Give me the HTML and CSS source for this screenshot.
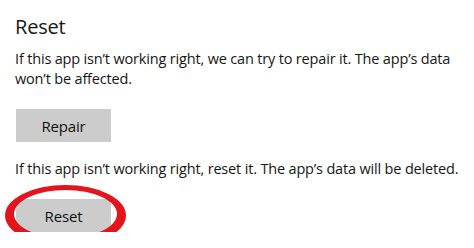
FILE: index.html
```html
<!DOCTYPE html>
<html>
<head>
<meta charset="utf-8">
<link rel="stylesheet" href="styles.css">
</head>
<body>
<section class="panel">
  <h2 class="title">Reset</h2>
  <p class="desc">If this app isn’t working right, we can try to repair it. The app’s data<br>won’t be affected.</p>
  <button class="btn btn-repair">Repair</button>
  <p class="desc desc-reset">If this app isn’t working right, reset it. The app’s data will be deleted.</p>
  <div class="btn-wrap">
    <button class="btn">Reset</button>
    <svg class="circle" width="135" height="70" viewBox="0 0 135 70" aria-hidden="true">
      <path fill="#e3141c" fill-rule="evenodd" d="M5 35.5a60.5 30.5 0 1 0 121 0a60.5 30.5 0 1 0 -121 0Z M14 34a51.5 24 0 1 0 103 0a51.5 24 0 1 0 -103 0Z"/>
    </svg>
  </div>
</section>
</body>
</html>
```
FILE: styles.css
```css
html, body {
  margin: 0;
  padding: 0;
  background: #ffffff;
}
body {
  font-family: "Open Sans", "Noto Sans", sans-serif;
  color: #161616;
}
.panel {
  padding: 13px 0 0 15px;
  display: flex;
  flex-direction: column;
  align-items: flex-start;
}
.title {
  margin: 0;
  font-size: 20px;
  font-weight: 400;
  line-height: 28px;
  letter-spacing: -0.2px;
}
.desc {
  margin: 8px 0 0 0;
  font-size: 14.5px;
  line-height: 20px;
  letter-spacing: -0.17px;
  white-space: nowrap;
}
.btn {
  margin: 0;
  padding: 0;
  border: none;
  width: 95px;
  height: 33px;
  background: #cccccc;
  color: #111111;
  font-family: inherit;
  font-size: 15px;
  letter-spacing: -0.15px;
}
.btn-repair {
  margin-top: 20px;
  margin-left: 1px;
}
.desc-reset {
  margin-top: 17px;
}
.btn-wrap {
  position: relative;
  margin-top: 20px;
  margin-left: 1px;
}
.btn-wrap .btn {
  display: block;
}
.circle {
  position: absolute;
  left: -16px;
  top: -19px;
}
```
